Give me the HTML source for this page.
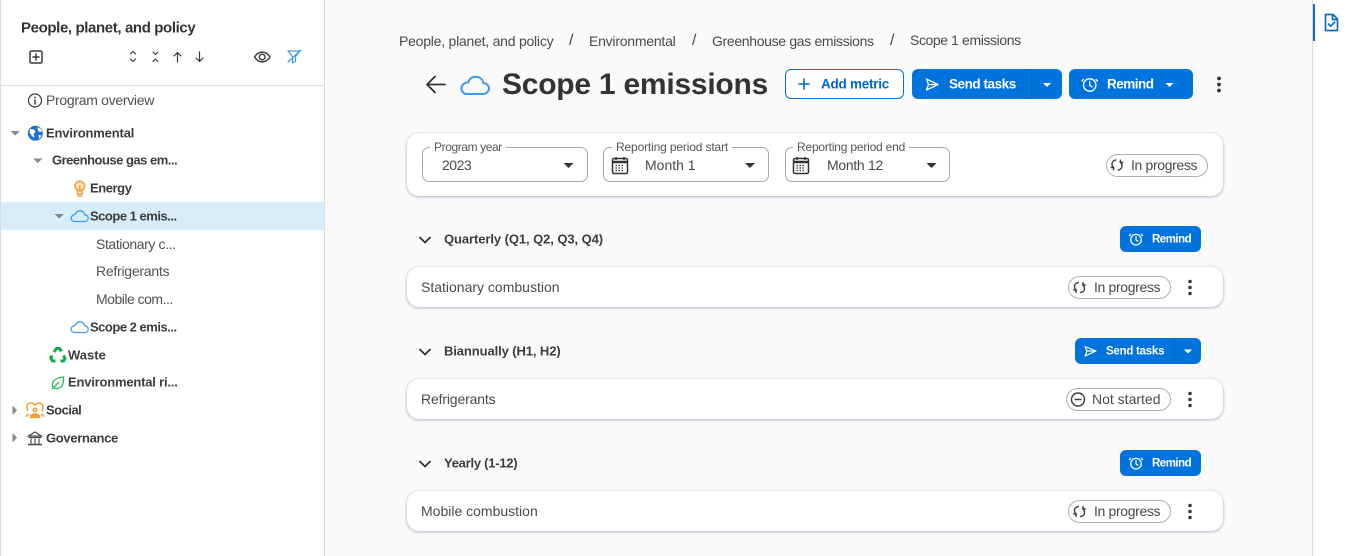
<!DOCTYPE html>
<html><head><meta charset="utf-8"><title>Scope 1 emissions</title>
<style>
html,body{margin:0;padding:0;width:1350px;height:556px;overflow:hidden;background:#fafafa;font-family:"Liberation Sans",sans-serif;color:#3a3a3a}
#p{position:relative;width:1350px;height:556px;overflow:hidden}
.a{position:absolute;box-sizing:border-box}
.t{position:absolute;white-space:nowrap;line-height:1;transform:translateY(-50%)}
.s{font-size:14px;color:#505050}
.b{font-size:13px;font-weight:bold;color:#3c3c3c}
.m{font-size:14px;color:#4a4a4a}
.card{position:absolute;box-sizing:border-box;background:#fff;border-radius:12px;box-shadow:0 1px 3px rgba(70,85,125,.38),0 0 2px rgba(70,85,125,.12);left:407px;width:816px}
.sel{position:absolute;box-sizing:border-box;border:1px solid #a8a8a8;border-radius:7px;top:147px;height:35px;background:#fff}
.lab{position:absolute;white-space:nowrap;line-height:1;background:#fff;padding:0 4px;font-size:12px;color:#555;transform:translateY(-50%);top:147px}
.pill{position:absolute;box-sizing:border-box;border:1px solid #b0b0b0;border-radius:12px;background:#fff;height:23px}
.btn{position:absolute;box-sizing:border-box;background:#0073dc;border-radius:6px}
.w{color:#fff;font-weight:bold}
svg{position:absolute;overflow:visible}
.ic{fill:none;stroke:#3a3a3a;stroke-width:1.5;stroke-linecap:round;stroke-linejoin:round}
.tri{fill:#333;stroke:none}
.gr{fill:#888;stroke:none}
</style></head><body><div id="p">

<!-- sidebar -->
<div class="a" style="left:0;top:0;width:325px;height:556px;background:#fff;border-left:1px solid #dedede;border-right:1px solid #dcdcdc"></div>
<div class="a" style="left:1px;top:85px;width:323px;height:1px;background:#dcdcdc"></div>
<div class="a" style="left:1px;top:202px;width:323px;height:28px;background:#d7edfc"></div>
<span class="t" style="left:21px;top:28px;font-size:15px;font-weight:bold;color:#333;letter-spacing:-.38px">People, planet, and policy</span>

<svg style="left:0;top:0" width="325" height="556" viewBox="0 0 325 556">
 <!-- toolbar -->
 <rect x="30" y="51" width="12" height="12" rx="1.5" class="ic"/><path d="M36 54v6M33 57h6" class="ic"/>
 <path d="M130.500 54l2.500-2.500 2.500 2.500M130.500 59l2.500 2.500 2.500-2.500" class="ic" style="stroke-width:1.2"/>
 <path d="M153 52l2.500 2.500 2.500-2.500M153 61.500l2.500-2.500 2.500 2.500" class="ic" style="stroke-width:1.2"/>
 <path d="M177.500 62v-9.500M174 56l3.500-3.500 3.500 3.500" class="ic" style="stroke-width:1.2"/>
 <path d="M199.500 52v9.500M196 58l3.500 3.500 3.500-3.500" class="ic" style="stroke-width:1.2"/>
 <path d="M254.500 57c4-6.500 11.500-6.500 15.500 0-4 6.500-11.500 6.500-15.500 0z" class="ic" style="stroke-width:1.400"/><circle cx="262.200" cy="57" r="2.800" class="ic" style="stroke-width:1.400"/>
 <path d="M288 51h12l-4.500 5.500v5l-3 1.500v-6.500zM288 62l13-12" class="ic" style="stroke:#3d9bf0;stroke-width:1.2"/>
 <!-- program overview -->
 <circle cx="35" cy="100.500" r="6.500" class="ic" style="stroke-width:1.2"/><path d="M35 100v4" class="ic" style="stroke-width:1.4"/><circle cx="35" cy="97.500" r=".9" fill="#3a3a3a"/>
 <!-- carets -->
 <path d="M10.500 131h9.500l-4.750 4.500z" class="gr"/>
 <path d="M33 158.500h9.500l-4.750 4.500z" class="gr"/>
 <path d="M54.500 214h9.500l-4.750 4.500z" class="gr"/>
 <path d="M12.500 405.500v9.500l4.500-4.750z" class="gr"/>
 <path d="M12.500 433v9.500l4.500-4.750z" class="gr"/>
 <!-- globe -->
 <circle cx="35.300" cy="133.300" r="7.500" fill="#1d72cf"/><path d="M30 129l4 .5 1.500 2.500-2 2 1 4-2.500-2-2.500-3.500zM37 127l4 2 1 3-3.500-.5zM38.500 135l3 .5-2.500 3.500z" fill="#fff"/>
 <!-- bulb -->
 <circle cx="79.800" cy="186" r="4.800" fill="#fde3b8" stroke="#f09a36" stroke-width="1.500"/><path d="M77.500 191.500v2.500h4.600v-2.500M78 196h3.500M79.800 186v5" fill="none" stroke="#f09a36" stroke-width="1.500" stroke-linecap="round"/>
 <!-- clouds -->
 <path d="M75 221.500h9c2.600 0 4.200-1.500 4.200-3.400 0-2-1.500-3.200-3.400-3.300-.6-2.500-2.700-4-4.800-4-2.400 0-4 1.400-4.900 3.700-2.300.1-3.900 1.700-3.900 3.700 0 2 1.500 3.300 3.800 3.300z" fill="none" stroke="#3d9bf0" stroke-width="1.300"/>
 <path d="M75 332.500h9c2.600 0 4.200-1.500 4.200-3.400 0-2-1.500-3.200-3.400-3.300-.6-2.500-2.700-4-4.800-4-2.400 0-4 1.400-4.900 3.700-2.300.1-3.900 1.700-3.900 3.700 0 2 1.500 3.300 3.800 3.300z" fill="none" stroke="#3d9bf0" stroke-width="1.300"/>
 <!-- recycle -->
 <g fill="none" stroke="#18a84a" stroke-width="3">
  <path d="M54 352l2.500-3.500h3l2 3"/><path d="M63.500 355.500l1.500 3-1.500 2.500h-3"/><path d="M55.500 361h-3l-1.800-3 1.300-2.500"/>
 </g>
 <!-- leaf -->
 <path d="M53 387.500c-2-4 0-9.500 10.500-10.500.3 6-1 11-6 11.500-1.500.2-3.300 0-4.500-1zM52.500 388.500l6-6" fill="none" stroke="#2ebd59" stroke-width="1.300" stroke-linecap="round"/>
 <!-- social -->
 <g fill="none" stroke="#f6a03c" stroke-width="1.600"><path d="M28 411c-2.500-5.500-.5-8 3-8 2 0 3 1 4 2 1-1 2-2 4-2 3.500 0 5.500 2.500 3 8"/><circle cx="35" cy="410" r="1.700"/><path d="M30.500 417.500c0-2.500 2-3.500 4.500-3.500s4.500 1 4.500 3.500z" fill="#f6a03c"/><path d="M26.500 417c0-1.500 1-2.500 2.500-2.500M43.500 417c0-1.500-1-2.500-2.500-2.500"/></g>
 <!-- governance -->
 <g fill="none" stroke="#4a4a4a" stroke-width="1.200"><path d="M28.500 436l6.500-4 6.500 4z"/><path d="M31 438.500v5M35 438.500v5M39 438.500v5"/><path d="M28 444.500h14" stroke-width="1.600"/><path d="M28.500 437.500h13"/></g>
</svg>

<span class="t s" style="left:46px;top:100px;letter-spacing:-.3px">Program overview</span>
<span class="t b" style="left:46px;top:133px;letter-spacing:-.16px">Environmental</span>
<span class="t b" style="left:52px;top:160px;letter-spacing:-.5px">Greenhouse gas em...</span>
<span class="t b" style="left:90px;top:188px;letter-spacing:-.43px">Energy</span>
<span class="t b" style="left:90px;top:216px;letter-spacing:-.49px">Scope 1 emis...</span>
<span class="t s" style="left:96px;top:244px;letter-spacing:-.4px">Stationary c...</span>
<span class="t s" style="left:96px;top:271px;letter-spacing:-.25px">Refrigerants</span>
<span class="t s" style="left:96px;top:299px;letter-spacing:-.5px">Mobile com...</span>
<span class="t b" style="left:90px;top:327px;letter-spacing:-.49px">Scope 2 emis...</span>
<span class="t b" style="left:68px;top:355px">Waste</span>
<span class="t b" style="left:68px;top:382px;letter-spacing:-.2px">Environmental ri...</span>
<span class="t b" style="left:46px;top:410px;letter-spacing:-.5px">Social</span>
<span class="t b" style="left:46px;top:438px;letter-spacing:-.32px">Governance</span>

<!-- right rail -->
<div class="a" style="left:1312px;top:0;width:38px;height:556px;background:#fff;border-left:1px solid #dcdcdc"></div>
<div class="a" style="left:1313px;top:4px;width:2px;height:37px;background:#0f6cc4"></div>
<svg style="left:0;top:0" width="1350" height="556" viewBox="0 0 1350 556">
 <path d="M1325.500 14.500h7.500l4.500 4.500v11.500h-12zM1332.500 14.500v5h5M1328.500 24l2.200 2.200 4-4" fill="none" stroke="#0f6cc4" stroke-width="1.700" stroke-linejoin="round" stroke-linecap="round"/>
</svg>

<!-- breadcrumb -->
<span class="t m" style="left:399px;top:41px;letter-spacing:-.23px">People, planet, and policy</span>
<span class="t m" style="left:569px;top:41px;font-size:16px">/</span>
<span class="t m" style="left:589px;top:41px;letter-spacing:-.23px">Environmental</span>
<span class="t m" style="left:692px;top:41px;font-size:16px">/</span>
<span class="t m" style="left:712px;top:41px;letter-spacing:-.33px">Greenhouse gas emissions</span>
<span class="t m" style="left:890px;top:41px;font-size:16px">/</span>
<span class="t m" style="left:910px;top:40px;letter-spacing:-.4px">Scope 1 emissions</span>

<!-- heading -->
<svg style="left:0;top:0" width="1350" height="556" viewBox="0 0 1350 556">
 <path d="M445 84.500h-17.500M435 76.500l-8 8 8 8" fill="none" stroke="#333" stroke-width="1.800" stroke-linecap="round" stroke-linejoin="round"/>
 <path d="M466.500 94h16c3.600 0 6.500-2.300 6.500-5.500 0-3-2.300-5-5.400-5.200-1-4.200-4-6.500-7.800-6.500-3.700 0-6.300 2.200-7.700 5.500-3.700.2-6.600 2.600-6.600 6 0 3.300 2.500 5.700 5 5.700z" fill="none" stroke="#3d9bf0" stroke-width="2"/>
</svg>
<span class="t" style="left:502px;top:85px;font-size:30px;font-weight:bold;color:#333;letter-spacing:-.24px">Scope 1 emissions</span>

<div class="a" style="left:785px;top:69px;width:119px;height:30px;border:1px solid #0073dc;border-radius:6px;background:#fff"></div>
<span class="t" style="left:821px;top:84px;font-size:13.5px;font-weight:bold;color:#0067c8;letter-spacing:-.25px">Add metric</span>
<div class="btn" style="left:912px;top:69px;width:150px;height:30px"></div>
<div class="a" style="left:1031px;top:69px;width:1px;height:30px;background:#0a64ba"></div>
<span class="t w" style="left:949px;top:84px;font-size:13.5px;letter-spacing:-.45px">Send tasks</span>
<div class="btn" style="left:1069px;top:69px;width:124px;height:30px"></div>
<span class="t w" style="left:1107px;top:84px;font-size:13.5px;letter-spacing:-.5px">Remind</span>
<svg style="left:0;top:0" width="1350" height="556" viewBox="0 0 1350 556">
 <path d="M804 79v10M799 84h10" stroke="#0067c8" stroke-width="1.600" stroke-linecap="round"/>
 <path d="M926.500 79l11.500 5.500-11.500 5.500 2-5.500zM928.500 84.500h9" fill="none" stroke="#fff" stroke-width="1.300" stroke-linejoin="round"/>
 <path d="M1043 83h8l-4 4z" fill="#fff"/>
 <circle cx="1089.700" cy="85" r="6.200" fill="none" stroke="#fff" stroke-width="1.400"/><path d="M1089.700 81.500v3.800l2.400 1.500M1083.500 79.500l-1.500 1.500M1096 79.500l1.500 1.500" fill="none" stroke="#fff" stroke-width="1.300" stroke-linecap="round"/>
 <path d="M1165.500 83h8l-4 4z" fill="#fff"/>
 <g fill="#333"><circle cx="1219" cy="78.500" r="1.900"/><circle cx="1219" cy="84.500" r="1.900"/><circle cx="1219" cy="90.500" r="1.900"/></g>
</svg>

<!-- filter card -->
<div class="card" style="top:133px;height:63px"></div>
<div class="sel" style="left:422px;width:166px"></div>
<div class="sel" style="left:603px;width:166px"></div>
<div class="sel" style="left:785px;width:165px"></div>
<span class="lab" style="left:430px;letter-spacing:-.4px">Program year</span>
<span class="lab" style="left:612px;letter-spacing:-.15px">Reporting period start</span>
<span class="lab" style="left:793px;letter-spacing:-.2px">Reporting period end</span>
<span class="t m" style="left:442px;top:165px;letter-spacing:-.5px">2023</span>
<span class="t m" style="left:645px;top:165px">Month 1</span>
<span class="t m" style="left:827px;top:165px;letter-spacing:-.3px">Month 12</span>
<div class="pill" style="left:1106px;top:154px;width:102px"></div>
<span class="t m" style="left:1131px;top:165px;letter-spacing:-.35px">In progress</span>

<!-- rows -->
<div class="card" style="top:267px;height:40px"></div>
<div class="card" style="top:379px;height:40px"></div>
<div class="card" style="top:491px;height:40px"></div>
<span class="t m" style="left:421px;top:287px">Stationary combustion</span>
<span class="t m" style="left:421px;top:399px;letter-spacing:-.15px">Refrigerants</span>
<span class="t m" style="left:421px;top:511px">Mobile combustion</span>
<div class="pill" style="left:1068px;top:276px;width:103px"></div>
<div class="pill" style="left:1066px;top:388px;width:105px"></div>
<div class="pill" style="left:1068px;top:500px;width:103px"></div>
<span class="t m" style="left:1094px;top:287px;letter-spacing:-.35px">In progress</span>
<span class="t m" style="left:1092px;top:399px">Not started</span>
<span class="t m" style="left:1094px;top:511px;letter-spacing:-.35px">In progress</span>

<!-- section headers -->
<span class="t b" style="left:444px;top:239px;font-size:13px;letter-spacing:-.08px">Quarterly (Q1, Q2, Q3, Q4)</span>
<span class="t b" style="left:444px;top:351px;font-size:13px;letter-spacing:-.1px">Biannually (H1, H2)</span>
<span class="t b" style="left:444px;top:463px;font-size:13px;letter-spacing:-.25px">Yearly (1-12)</span>

<div class="btn" style="left:1120px;top:226px;width:81px;height:26px"></div>
<div class="btn" style="left:1075px;top:338px;width:126px;height:26px"></div>
<div class="a" style="left:1174px;top:338px;width:1px;height:26px;background:#0a64ba"></div>
<div class="btn" style="left:1120px;top:450px;width:81px;height:26px"></div>
<span class="t w" style="left:1152px;top:240px;font-size:11.5px;letter-spacing:-.5px">Remind</span>
<span class="t w" style="left:1106px;top:352px;font-size:11.5px;letter-spacing:-.25px">Send tasks</span>
<span class="t w" style="left:1152px;top:464px;font-size:11.5px;letter-spacing:-.5px">Remind</span>

<svg style="left:0;top:0" width="1350" height="556" viewBox="0 0 1350 556">
 <defs>
  <g id="sync"><path d="M-1.200-5C-4-4.500-5.200-2.500-5-.5-4.900 1-4 2.300-3 3M-3.500 4.800V2.500H-5.700M1.200 5C4 4.500 5.200 2.500 5 .5 4.900-1 4-2.300 3-3M3.500-4.800V-2.500H5.700" fill="none" stroke="#3a3a3a" stroke-width="1.400" stroke-linecap="round" stroke-linejoin="round"/></g>
  <g id="keb" fill="#3a3a3a"><circle cx="0" cy="-6" r="1.800"/><circle cx="0" cy="0" r="1.800"/><circle cx="0" cy="6" r="1.800"/></g>
  <g id="chev"><path d="M-5-2.500L0 2.500 5-2.500" fill="none" stroke="#333" stroke-width="1.800" stroke-linecap="round" stroke-linejoin="round"/></g>
  <g id="alarm" fill="none" stroke="#fff"><circle cx="0" cy="0.700" r="5.300" stroke-width="1.300"/><path d="M0-2.300v3.200l2 1.300M-5.400-4.700l-1.300 1.300M5.400-4.700l1.300 1.300" stroke-width="1.200" stroke-linecap="round"/></g>
  <g id="cal"><rect x="-7.500" y="-7" width="15" height="15" rx="1.500" fill="none" stroke="#333" stroke-width="1.500"/><path d="M-7.500-3.500h15" stroke="#333" stroke-width="2.500"/><path d="M-4-8.500v3M4-8.500v3" stroke="#333" stroke-width="1.500"/><path d="M-4.500 0h9M-4.500 2.500h9M-4.500 5h9" stroke="#333" stroke-width="1.200" stroke-dasharray="1.500 1.500"/></g>
 </defs>
 <path d="M563.500 163h10l-5 5zM745 163h10l-5 5zM926.500 163h10l-5 5z" class="tri"/>
 <use href="#cal" x="620" y="165.500"/><use href="#cal" x="801" y="165.500"/>
 <use href="#sync" x="1117" y="165"/><use href="#sync" x="1079.500" y="287.500"/><use href="#sync" x="1079.500" y="511.500"/>
 <circle cx="1078" cy="399.500" r="6.500" fill="none" stroke="#3a3a3a" stroke-width="1.400"/><path d="M1074.500 399.500h7" stroke="#3a3a3a" stroke-width="1.500"/>
 <use href="#keb" x="1190" y="287.500"/><use href="#keb" x="1190" y="399.500"/><use href="#keb" x="1190" y="511.500"/>
 <use href="#chev" x="425" y="240"/><use href="#chev" x="425" y="352"/><use href="#chev" x="425" y="464"/>
 <use href="#alarm" x="1136" y="239"/><use href="#alarm" x="1136" y="463"/>
 <path d="M1085 346.500l11 4.500-11 5 2-5zM1087 351h9" fill="none" stroke="#fff" stroke-width="1.200" stroke-linejoin="round"/>
 <path d="M1184 349.500h8l-4 4z" fill="#fff"/>
</svg>
</div></body></html>
